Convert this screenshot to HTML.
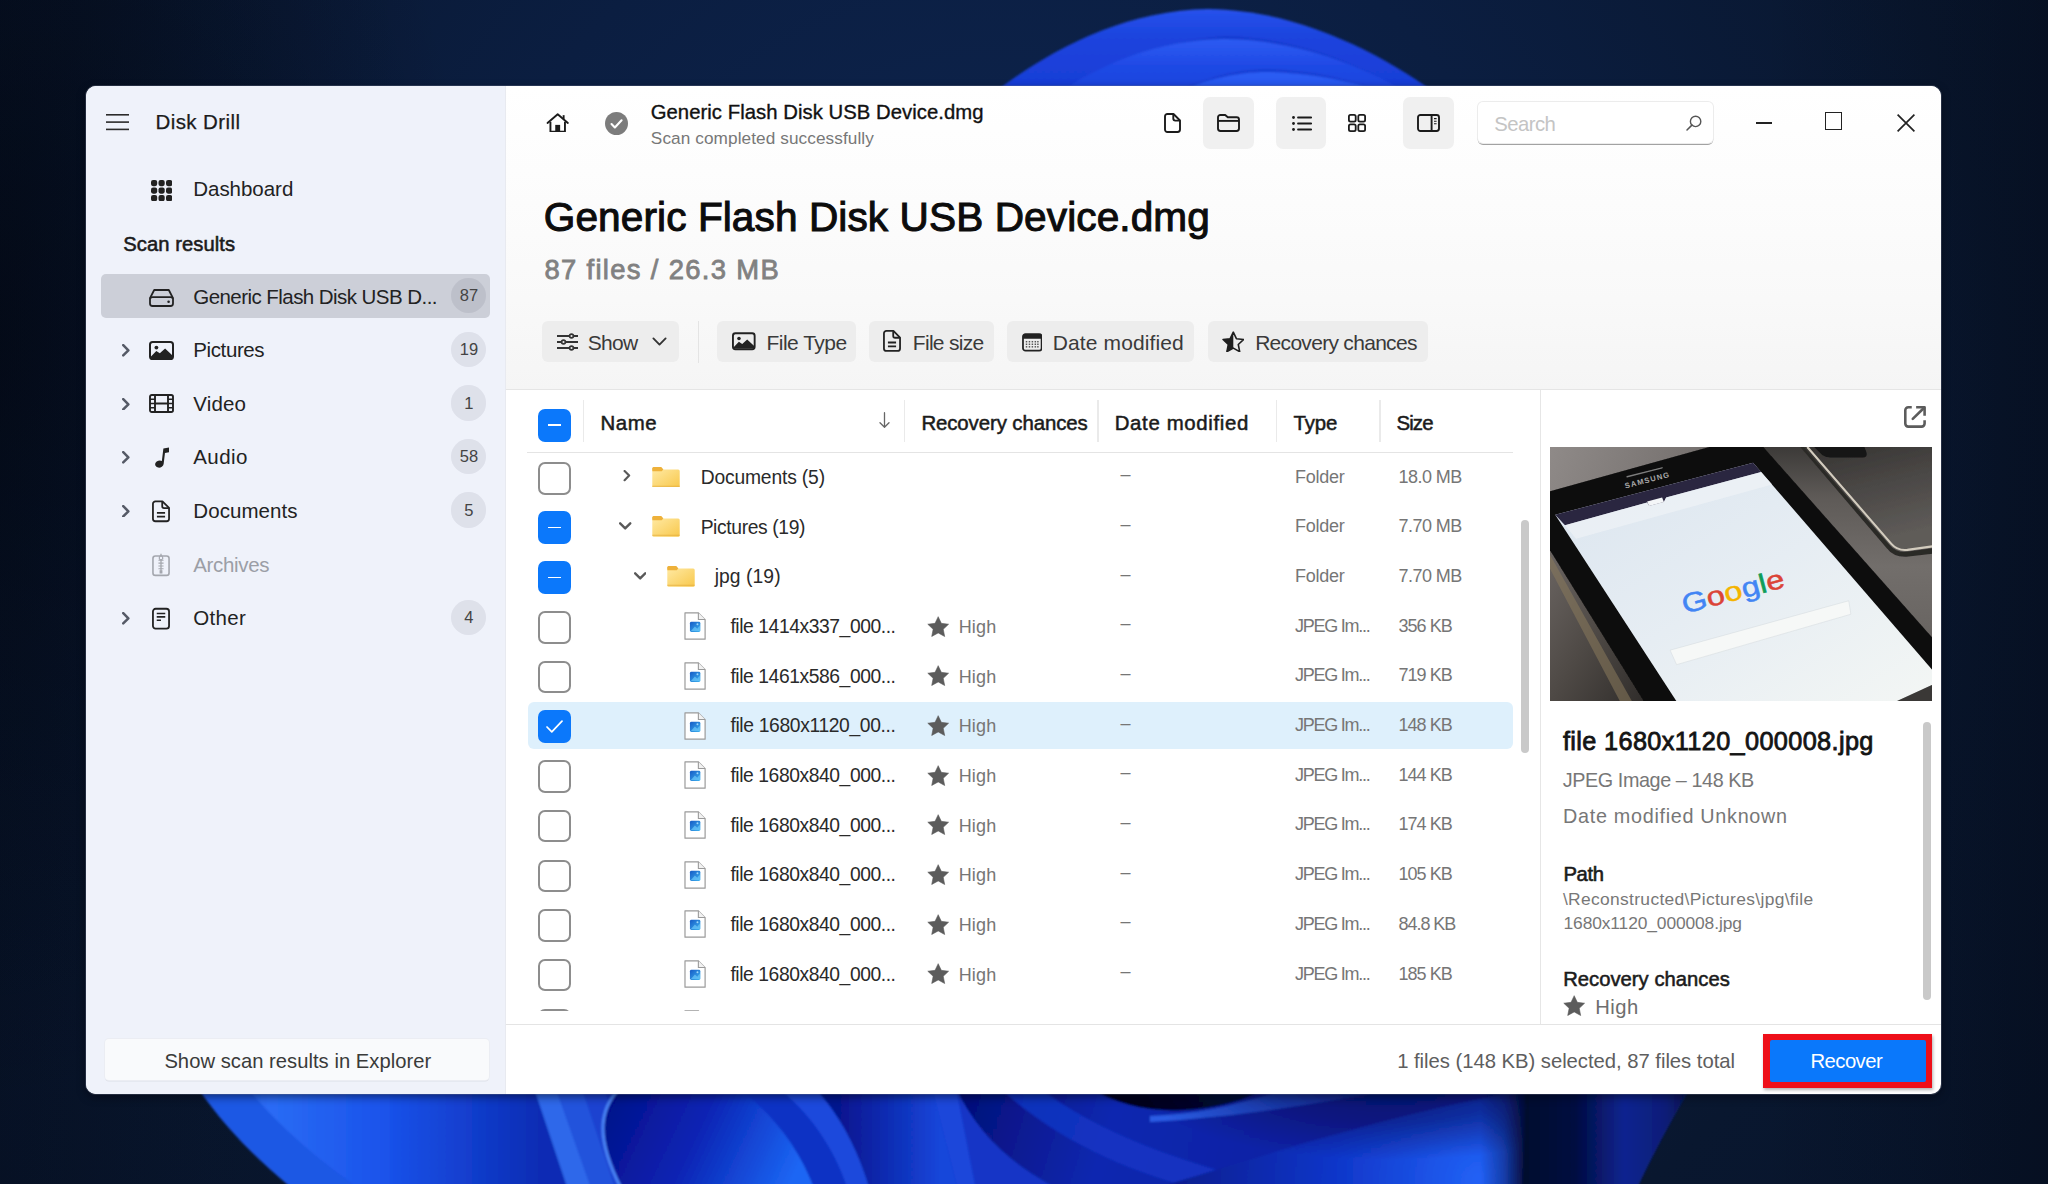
<!DOCTYPE html>
<html lang="en">
<head>
<meta charset="utf-8">
<title>Disk Drill</title>
<style>
*{box-sizing:border-box;margin:0;padding:0}
html,body{width:2048px;height:1184px;overflow:hidden;background:#0a1830}
body{font-family:"Liberation Sans",sans-serif;position:relative;color:#1b1b1b}
#stage{position:absolute;left:0;top:0;width:2048px;height:1184px;overflow:hidden}
#stage div,#stage svg.ic,#stage .t,#stage svg.wall,#stage svg.photo{position:absolute}
.t{white-space:pre;line-height:1;display:block}
nav,header,main,aside,footer,section,ul,li,h1,h2,h3,p,button{display:contents;list-style:none;font:inherit;border:0;background:none}
.win{border-radius:10px;box-shadow:0 0 0 1px rgba(120,130,155,.28),0 3px 9px 0 rgba(0,0,10,.5)}
.badge{border-radius:50%;background:rgba(10,15,40,.075)}
.chip{background:#ededed;border-radius:6px}
.tbb{background:#f0f0f0;border-radius:7px}
.cb{border:2px solid #8d8d8d;border-radius:7px;background:#fff}
.cbx{border-radius:7px;background:#0b78fb}
</style>
</head>
<body>
<div id="stage">
<svg class="wall" width="2048" height="1184" viewBox="0 0 2048 1184" aria-hidden="true">
<defs>
<radialGradient id="bgr" cx="1000" cy="420" r="1250" gradientUnits="userSpaceOnUse">
<stop offset="0" stop-color="#0e2652"/><stop offset=".45" stop-color="#0b1e41"/><stop offset=".8" stop-color="#09172f"/><stop offset="1" stop-color="#08152c"/></radialGradient>
<linearGradient id="bgv" x1="0" y1="0" x2="2048" y2="0" gradientUnits="userSpaceOnUse"><stop offset="0" stop-color="#02050e" stop-opacity=".25"/><stop offset=".1" stop-color="#02050e" stop-opacity=".08"/><stop offset=".2" stop-color="#02050e" stop-opacity="0"/><stop offset=".86" stop-color="#02050e" stop-opacity="0"/><stop offset=".94" stop-color="#02050e" stop-opacity=".15"/><stop offset="1" stop-color="#02050e" stop-opacity=".35"/></linearGradient>
<radialGradient id="bgl" cx="-40" cy="330" r="520" gradientUnits="userSpaceOnUse" gradientTransform="translate(-40 330) scale(1 1.5) translate(40 -330)"><stop offset="0" stop-color="#01040c" stop-opacity=".6"/><stop offset=".35" stop-color="#01040c" stop-opacity=".38"/><stop offset="1" stop-color="#01040c" stop-opacity="0"/></radialGradient>
<linearGradient id="ta" x1="0" y1="9" x2="0" y2="100" gradientUnits="userSpaceOnUse"><stop offset="0" stop-color="#2752ec"/><stop offset=".3" stop-color="#1c44de"/><stop offset="1" stop-color="#183cd4"/></linearGradient>
<linearGradient id="tb" x1="0" y1="39" x2="0" y2="100" gradientUnits="userSpaceOnUse"><stop offset="0" stop-color="#2d5cf3"/><stop offset=".45" stop-color="#1f49e4"/><stop offset="1" stop-color="#1b42da"/></linearGradient>
<linearGradient id="tc" x1="0" y1="0" x2="0" y2="1"><stop offset="0" stop-color="#2c5ef4"/><stop offset="1" stop-color="#2050ea"/></linearGradient>
<linearGradient id="b1" x1="200" y1="0" x2="540" y2="0" gradientUnits="userSpaceOnUse"><stop offset="0" stop-color="#1d52e2"/><stop offset=".2" stop-color="#2a6cf5"/><stop offset=".55" stop-color="#1a52ea"/><stop offset="1" stop-color="#0b2cb4"/></linearGradient>
<linearGradient id="b3" x1="600" y1="1094" x2="790" y2="1184" gradientUnits="userSpaceOnUse"><stop offset="0" stop-color="#040e86"/><stop offset=".5" stop-color="#0a24b4"/><stop offset="1" stop-color="#1c66f4"/></linearGradient>
<linearGradient id="b6" x1="838" y1="0" x2="940" y2="0" gradientUnits="userSpaceOnUse"><stop offset="0" stop-color="#06148e"/><stop offset="1" stop-color="#1646da"/></linearGradient>
<linearGradient id="b7" x1="960" y1="1094" x2="1250" y2="1184" gradientUnits="userSpaceOnUse"><stop offset="0" stop-color="#050e78"/><stop offset=".5" stop-color="#0b28b0"/><stop offset="1" stop-color="#0a22a6"/></linearGradient>
<radialGradient id="b8" cx="1480" cy="1180" r="330" gradientUnits="userSpaceOnUse"><stop offset="0" stop-color="#2262f6"/><stop offset=".45" stop-color="#0f35c8"/><stop offset="1" stop-color="#071a86"/></radialGradient>
<linearGradient id="b9" x1="1525" y1="0" x2="1690" y2="0" gradientUnits="userSpaceOnUse"><stop offset="0" stop-color="#03082e"/><stop offset=".3" stop-color="#040b40"/><stop offset=".6" stop-color="#0a2590"/><stop offset=".85" stop-color="#081d78"/><stop offset="1" stop-color="#06134e"/></linearGradient>
<radialGradient id="bdk" cx=".5" cy=".5" r=".5"><stop offset="0" stop-color="#050d5c" stop-opacity=".8"/><stop offset=".5" stop-color="#050d5c" stop-opacity=".5"/><stop offset="1" stop-color="#050d5c" stop-opacity="0"/></radialGradient>
<linearGradient id="bfo" x1="1480" y1="0" x2="1528" y2="0" gradientUnits="userSpaceOnUse"><stop offset="0" stop-color="#03082e" stop-opacity="0"/><stop offset=".5" stop-color="#03082e" stop-opacity=".35"/><stop offset="1" stop-color="#03082e" stop-opacity="1"/></linearGradient>
<filter id="bl" x="-2%" y="-20%" width="104%" height="140%"><feGaussianBlur stdDeviation="1.3"/></filter>
</defs>
<rect width="2048" height="1184" fill="url(#bgr)"/>
<rect width="2048" height="1184" fill="url(#bgv)"/>
<rect width="700" height="1184" fill="url(#bgl)"/>
<g filter="url(#bl)">
<path d="M985 100C1040 55 1120 10 1208 9C1300 10 1385 55 1445 100z" fill="url(#ta)"/>
<path d="M1042 106C1100 64 1160 41 1224 36C1300 38 1365 64 1428 106z" fill="#1232c0" opacity=".5"/>
<path d="M1050 100C1100 62 1160 40 1224 39C1300 40 1365 66 1420 100z" fill="url(#tb)"/>
<path d="M1150 104C1200 78 1235 69 1268 69C1320 70 1370 84 1418 104z" fill="#1232c0" opacity=".45"/>
<path d="M1160 100C1200 80 1235 72 1268 72C1320 73 1370 86 1410 100z" fill="url(#tc)"/>
</g>
<g filter="url(#bl)">
<path d="M198 1088C225 1128 258 1160 294 1190H1636C1650 1160 1668 1125 1690 1088z" fill="#1236c6"/>
<path d="M198 1088C225 1128 258 1160 294 1190H360C318 1160 280 1128 247 1088z" fill="#1f58e4"/>
<path d="M247 1088C280 1128 318 1160 360 1190H570L534 1088z" fill="url(#b1)"/>
<path d="M534 1088L568 1190H592L556 1088z" fill="#2e68ea"/>
<path d="M556 1088L592 1190H616L582 1088z" fill="#2253dc"/>
<path d="M582 1088L616 1190H640L604 1088z" fill="#1a42d0"/>
<path d="M620 1088C598 1110 596 1140 622 1190H815C800 1150 775 1115 738 1088z" fill="url(#b3)"/>
<path d="M620 1088C598 1110 596 1140 622 1190" fill="none" stroke="#4a84f6" stroke-width="3"/>
<path d="M738 1088C775 1115 800 1150 815 1190H848C835 1150 812 1115 778 1088z" fill="#1030c4"/>
<path d="M778 1088C812 1115 835 1150 848 1190H870C858 1150 842 1118 815 1088z" fill="#1a48dc"/>
<path d="M815 1088C842 1118 858 1150 870 1190H958L932 1088z" fill="url(#b6)"/>
<path d="M932 1088L958 1190H976L956 1088z" fill="#1a46da"/>
<path d="M956 1088C975 1130 1010 1165 1060 1190H1530L1530 1088z" fill="url(#b7)"/>
<path d="M1000 1088C1050 1135 1120 1170 1200 1190H1300C1200 1170 1100 1135 1040 1088z" fill="#1436c6" opacity=".8"/>
<path d="M1090 1088C1130 1112 1180 1118 1240 1100L1270 1088z" fill="#02051e"/>
<path d="M1150 1190C1250 1160 1400 1110 1540 1088H1530L1540 1190z" fill="url(#b8)"/>
<path d="M1150 1122C1230 1118 1320 1104 1400 1088H1290C1240 1104 1200 1114 1150 1116z" fill="#2a5ce4"/>
<ellipse cx="1390" cy="1086" rx="250" ry="74" fill="url(#bdk)"/>
<rect x="1480" y="1088" width="48" height="102" fill="url(#bfo)"/>
<path d="M1526 1088L1522 1190H1636C1650 1160 1668 1125 1690 1088z" fill="url(#b9)"/>
</g>
</svg>
<div class="win" style="left:86.2px;top:86.4px;width:1854.8px;height:1007.6px;background:#fff;overflow:hidden"><div style="left:0px;top:0px;width:419.8px;height:1007.6px;background:#eff2fa"></div><div style="left:419.8px;top:0px;width:1435px;height:303.6px;background:linear-gradient(#fff 0,#fdfdfd 28%,#f9f9f9 70%,#f5f5f5 100%)"></div><div style="left:419.8px;top:302.5px;width:1435px;height:1.5px;background:#e5e5e5"></div><div style="left:419.3px;top:0px;width:1px;height:1007.6px;background:#e8eaf0"></div><div style="left:1453.3999999999999px;top:303.6px;width:1.3px;height:634.5999999999999px;background:#e6e6e6"></div><div style="left:419.8px;top:937.4px;width:1435px;height:1.4px;background:#e4e4e4"></div></div>
<nav>
<svg class="ic" style="left:106px;top:113.6px" width="23" height="17" viewBox="0 0 23 17" ><rect x="0" y="0" width="23" height="1.6" fill="#2b2b2b"/><rect x="0" y="7.3" width="23" height="1.6" fill="#2b2b2b"/><rect x="0" y="14.6" width="23" height="1.6" fill="#2b2b2b"/></svg>
<h2 class="t" style="left:155.47px;top:111.70px;font-size:20.5px;color:#1b1b1b;letter-spacing:0.407px;-webkit-text-stroke:0.25px #1b1b1b;">Disk Drill</h2>
<svg class="ic" style="left:151px;top:179.7px" width="21" height="21" viewBox="0 0 21 21" ><rect x="0.0" y="0.0" width="6.200" height="6.200" rx="2.100" fill="#222"/><rect x="7.5" y="0.0" width="6.200" height="6.200" rx="2.100" fill="#222"/><rect x="15.0" y="0.0" width="6.200" height="6.200" rx="2.100" fill="#222"/><rect x="0.0" y="7.5" width="6.200" height="6.200" rx="2.100" fill="#222"/><rect x="7.5" y="7.5" width="6.200" height="6.200" rx="2.100" fill="#222"/><rect x="15.0" y="7.5" width="6.200" height="6.200" rx="2.100" fill="#222"/><rect x="0.0" y="15.0" width="6.200" height="6.200" rx="2.100" fill="#222"/><rect x="7.5" y="15.0" width="6.200" height="6.200" rx="2.100" fill="#222"/><rect x="15.0" y="15.0" width="6.200" height="6.200" rx="2.100" fill="#222"/></svg>
<span class="t" style="left:193.28px;top:179.40px;font-size:20.5px;color:#222;letter-spacing:-0.034px;">Dashboard</span>
<h3 class="t" style="left:123.29px;top:233.60px;font-size:20.2px;color:#1b1b1b;letter-spacing:0.065px;-webkit-text-stroke:0.55px #1b1b1b;">Scan results</h3>
<div style="left:101.3px;top:274.2px;width:388.8px;height:44px;background:#cccfd8;border-radius:5px"></div>
<ul>
<li>
<svg class="ic" style="left:149px;top:289.4px" width="25" height="18" viewBox="0 0 25 18" ><path d="M5.2 1h14.6l4.2 8.2v5.3a2.5 2.5 0 0 1-2.5 2.5h-18A2.5 2.5 0 0 1 1 14.500V9.200z" fill="none" stroke="#222" stroke-width="1.8" stroke-linejoin="round"/><path d="M1.200 9.500a2.500 2.500 0 0 1 2.300-1.300h18a2.500 2.500 0 0 1 2.300 1.300" fill="none" stroke="#222" stroke-width="1.8"/><circle cx="19.6" cy="12.8" r="1.3" fill="#222"/></svg>
<span class="t" style="left:193.28px;top:286.50px;font-size:20.5px;color:#222;letter-spacing:-0.553px;">Generic Flash Disk USB D...</span>
<div class="badge" style="left:450.5px;top:277.9px;width:35.6px;height:35.6px;"></div>
<span class="t" style="left:459.78px;top:287.40px;font-size:16.5px;color:#444;letter-spacing:0.066px;">87</span>
</li>
<li>
<svg class="ic" style="left:122.1px;top:344.1px" width="7.9" height="12.6" viewBox="0 0 8 13" ><path d="M1.200 1.200l5.300 5.300-5.300 5.300" fill="none" stroke="#555a66" stroke-width="2.6" stroke-linecap="round" stroke-linejoin="round"/></svg>
<svg class="ic" style="left:149px;top:340.7px" width="25" height="19" viewBox="0 0 25 19" ><rect x="1" y="1" width="23" height="17" rx="2.6" fill="none" stroke="#222" stroke-width="2"/><circle cx="7.4" cy="6.600" r="1.9" fill="#222"/><path d="M1.500 16l5.800-6 3.500 2.300 5.300-4.700 7.400 7v2.900h-22z" fill="#222"/></svg>
<span class="t" style="left:193.28px;top:340.10px;font-size:20.5px;color:#222;letter-spacing:-0.391px;">Pictures</span>
<div class="badge" style="left:450.5px;top:331.5px;width:35.6px;height:35.6px;"></div>
<span class="t" style="left:459.78px;top:341.00px;font-size:16.5px;color:#444;letter-spacing:0.066px;">19</span>
</li>
<li>
<svg class="ic" style="left:122.1px;top:397.7px" width="7.9" height="12.6" viewBox="0 0 8 13" ><path d="M1.200 1.200l5.300 5.300-5.300 5.300" fill="none" stroke="#555a66" stroke-width="2.6" stroke-linecap="round" stroke-linejoin="round"/></svg>
<svg class="ic" style="left:149px;top:394.4px" width="25" height="19" viewBox="0 0 25 19" ><rect x="1" y="1" width="23" height="17" rx="1.8" fill="none" stroke="#222" stroke-width="1.9"/><path d="M6 1v17M19 1v17M6 9.500h13" stroke="#222" stroke-width="1.9" fill="none"/><path d="M1 5.200h5M1 9.500h5M1 13.800h5M19 5.200h5M19 9.500h5M19 13.800h5" stroke="#222" stroke-width="1.400" fill="none"/></svg>
<span class="t" style="left:193.28px;top:393.70px;font-size:20.5px;color:#222;letter-spacing:0.141px;">Video</span>
<div class="badge" style="left:450.5px;top:385.09999999999997px;width:35.6px;height:35.6px;"></div>
<span class="t" style="left:464.33px;top:394.60px;font-size:16.5px;color:#444;">1</span>
</li>
<li>
<svg class="ic" style="left:122.1px;top:451.3px" width="7.9" height="12.6" viewBox="0 0 8 13" ><path d="M1.200 1.200l5.300 5.300-5.300 5.300" fill="none" stroke="#555a66" stroke-width="2.6" stroke-linecap="round" stroke-linejoin="round"/></svg>
<svg class="ic" style="left:154.3px;top:446.8px" width="14.6" height="21.6" viewBox="0 0 14 21" ><g transform="translate(2.600 0) skewX(-7)"><path d="M6.600 1.500l6.400-1.300v4.800l-4.300.9v10.600a4.100 3.500 0 1 1-2.100-3z" fill="#222"/></g></svg>
<span class="t" style="left:193.28px;top:447.30px;font-size:20.5px;color:#222;letter-spacing:0.422px;">Audio</span>
<div class="badge" style="left:450.5px;top:438.7px;width:35.6px;height:35.6px;"></div>
<span class="t" style="left:459.78px;top:448.20px;font-size:16.5px;color:#444;letter-spacing:0.066px;">58</span>
</li>
<li>
<svg class="ic" style="left:122.1px;top:504.90000000000003px" width="7.9" height="12.6" viewBox="0 0 8 13" ><path d="M1.200 1.200l5.300 5.300-5.300 5.300" fill="none" stroke="#555a66" stroke-width="2.6" stroke-linecap="round" stroke-linejoin="round"/></svg>
<svg class="ic" style="left:152.2px;top:500.3px" width="18" height="22.6" viewBox="0 0 19 23" ><path d="M3.600 1h7.400l7 7v11.400a2.600 2.600 0 0 1-2.600 2.600h-11.800a2.600 2.600 0 0 1-2.600-2.600v-15.800a2.600 2.600 0 0 1 2.600-2.600z" fill="none" stroke="#222" stroke-width="1.9" stroke-linejoin="round"/><path d="M10.800 1.200v5a2 2 0 0 0 2 2h5" fill="none" stroke="#222" stroke-width="1.9"/><path d="M5.200 13.200h8.600M5.200 17.200h8.600" stroke="#222" stroke-width="1.9" fill="none"/></svg>
<span class="t" style="left:193.28px;top:500.90px;font-size:20.5px;color:#222;letter-spacing:0.080px;">Documents</span>
<div class="badge" style="left:450.5px;top:492.3px;width:35.6px;height:35.6px;"></div>
<span class="t" style="left:464.33px;top:501.80px;font-size:16.5px;color:#444;">5</span>
</li>
<li>
<svg class="ic" style="left:152.2px;top:552.7px" width="18" height="24" viewBox="0 0 19 24" ><rect x="1" y="2.500" width="17" height="20.500" rx="2.600" fill="none" stroke="#a4a7ae" stroke-width="1.700"/><path d="M9.500 0v18" stroke="#a4a7ae" stroke-width="1.400"/><path d="M6.800 7h5.400M6.800 10h5.400M6.800 13h5.400M6.800 16h5.400" stroke="#a4a7ae" stroke-width="1.200"/><circle cx="9.500" cy="4.500" r="1.900" fill="#eef1f9" stroke="#a4a7ae" stroke-width="1.200"/><rect x="8" y="17.500" width="3" height="3.500" fill="#a4a7ae"/></svg>
<span class="t" style="left:193.28px;top:554.50px;font-size:20.5px;color:#9b9ea6;letter-spacing:-0.341px;">Archives</span>
</li>
<li>
<svg class="ic" style="left:122.1px;top:612.0999999999999px" width="7.9" height="12.6" viewBox="0 0 8 13" ><path d="M1.200 1.200l5.300 5.300-5.300 5.300" fill="none" stroke="#555a66" stroke-width="2.6" stroke-linecap="round" stroke-linejoin="round"/></svg>
<svg class="ic" style="left:152.2px;top:607.0999999999999px" width="18" height="23.4" viewBox="0 0 19 23" ><rect x="1" y="1" width="17" height="21" rx="2.800" fill="none" stroke="#222" stroke-width="1.900"/><path d="M5 6h9M5 9.600h9M5 13.200h4.500" stroke="#222" stroke-width="1.700" fill="none"/></svg>
<span class="t" style="left:193.28px;top:608.10px;font-size:20.5px;color:#222;letter-spacing:0.336px;">Other</span>
<div class="badge" style="left:450.5px;top:599.5px;width:35.6px;height:35.6px;"></div>
<span class="t" style="left:464.33px;top:609.00px;font-size:16.5px;color:#444;">4</span>
</li>
</ul>
<div style="left:105.1px;top:1039.3px;width:384.2px;height:41px;background:#f9fafc;border-radius:4px;box-shadow:0 0 0 1px #ebedf3,0 1.6px 0 0 #dcdfe7"></div>
<button><span class="t" style="left:164.39px;top:1050.90px;font-size:20.2px;color:#3a3a3a;letter-spacing:0.032px;">Show scan results in Explorer</span></button>
</nav>
<header>
<svg class="ic" style="left:546.3px;top:112.7px" width="23.4" height="19.8" viewBox="0 0 24 21" ><path d="M1.200 10.600L12 1.400l10.800 9.200" fill="none" stroke="#1b1b1b" stroke-width="2" stroke-linecap="round" stroke-linejoin="round"/><path d="M18.300 2.300v4" stroke="#1b1b1b" stroke-width="2" fill="none"/><path d="M4.300 9.300v10.500h15.400v-10.500" fill="none" stroke="#1b1b1b" stroke-width="2"/><rect x="9.400" y="12.600" width="5.200" height="7.200" fill="#1b1b1b"/></svg>
<svg class="ic" style="left:604.6px;top:112.1px" width="23.0" height="23.0" viewBox="0 0 24 24" ><circle cx="12" cy="12" r="12" fill="#7c7c7c"/><path d="M6.800 12.600l3.500 3.500 7-7.400" fill="none" stroke="#fff" stroke-width="2.200" stroke-linecap="round" stroke-linejoin="round"/></svg>
<h2 class="t" style="left:650.68px;top:102.30px;font-size:20.3px;color:#111;letter-spacing:0.048px;-webkit-text-stroke:0.35px #111;">Generic Flash Disk USB Device.dmg</h2>
<span class="t" style="left:650.84px;top:129.90px;font-size:17.2px;color:#777;letter-spacing:0.091px;">Scan completed successfully</span>
<svg class="ic" style="left:1163.6px;top:113px" width="17" height="20" viewBox="0 0 17 20" ><path d="M3.400 1h6.100l6.500 6.500v9.100a2.400 2.400 0 0 1-2.400 2.400h-10.200a2.400 2.400 0 0 1-2.400-2.400v-13.200a2.400 2.400 0 0 1 2.400-2.400z" fill="none" stroke="#1b1b1b" stroke-width="1.900" stroke-linejoin="round"/><path d="M9.300 1.200v4.400a2 2 0 0 0 2 2h4.500" fill="none" stroke="#1b1b1b" stroke-width="1.900"/></svg>
<div class="tbb" style="left:1202.6px;top:97.4px;width:51.2px;height:51.6px;"></div>
<svg class="ic" style="left:1216.8px;top:114px" width="23" height="18" viewBox="0 0 23 18" ><path d="M1 3.400a2.400 2.400 0 0 1 2.400-2.400h4.800l2.600 2.300h8.800a2.400 2.400 0 0 1 2.400 2.400v8.900a2.400 2.400 0 0 1-2.400 2.400h-16.200a2.400 2.400 0 0 1-2.400-2.400z" fill="none" stroke="#1b1b1b" stroke-width="1.900" stroke-linejoin="round"/><path d="M1 6.900h21" stroke="#1b1b1b" stroke-width="1.900"/></svg>
<div class="tbb" style="left:1276px;top:97.4px;width:50.4px;height:51.6px;"></div>
<svg class="ic" style="left:1291.8px;top:115.6px" width="20" height="15" viewBox="0 0 20 15" ><circle cx="1.500" cy="1.5" r="1.400" fill="#1b1b1b"/><path d="M6 1.5h13.200" stroke="#1b1b1b" stroke-width="1.800" stroke-linecap="round"/><circle cx="1.500" cy="7.5" r="1.400" fill="#1b1b1b"/><path d="M6 7.5h13.200" stroke="#1b1b1b" stroke-width="1.800" stroke-linecap="round"/><circle cx="1.500" cy="13.5" r="1.400" fill="#1b1b1b"/><path d="M6 13.5h13.200" stroke="#1b1b1b" stroke-width="1.800" stroke-linecap="round"/></svg>
<svg class="ic" style="left:1347.8px;top:114.2px" width="18" height="18" viewBox="0 0 18 18" ><rect x="0.9" y="0.9" width="6.800" height="6.800" rx="1.600" fill="none" stroke="#1b1b1b" stroke-width="1.800"/><rect x="0.9" y="10.3" width="6.800" height="6.800" rx="1.600" fill="none" stroke="#1b1b1b" stroke-width="1.800"/><rect x="10.3" y="0.9" width="6.800" height="6.800" rx="1.600" fill="none" stroke="#1b1b1b" stroke-width="1.800"/><rect x="10.3" y="10.3" width="6.800" height="6.800" rx="1.600" fill="none" stroke="#1b1b1b" stroke-width="1.800"/></svg>
<div class="tbb" style="left:1403.4px;top:97.4px;width:50.4px;height:51.6px;"></div>
<svg class="ic" style="left:1417.2px;top:114px" width="23" height="18" viewBox="0 0 23 18" ><rect x="1" y="1" width="21" height="16" rx="2.400" fill="none" stroke="#1b1b1b" stroke-width="1.900"/><path d="M14.600 1v16" stroke="#1b1b1b" stroke-width="1.900"/><path d="M17 4.600h2.600M17 7.200h2.600M17 9.800h2.600" stroke="#1b1b1b" stroke-width="1.100"/></svg>
<div style="left:1477.8px;top:101.6px;width:235.2px;height:41.6px;background:#fff;border-radius:5px;box-shadow:0 0 0 1px #ececec,0 1.6px 0 .3px #a2a2a2"></div>
<span class="t" style="left:1494.18px;top:113.60px;font-size:20.3px;color:#c4c4c4;letter-spacing:-0.530px;">Search</span>
<svg class="ic" style="left:1686px;top:114.6px" width="16" height="16" viewBox="0 0 16 16" ><circle cx="9.600" cy="6.400" r="5.200" fill="none" stroke="#555" stroke-width="1.400"/><path d="M5.900 10.100l-4.900 4.900" stroke="#555" stroke-width="1.500" stroke-linecap="round"/></svg>
<div style="left:1756px;top:122.1px;width:15.6px;height:1.6px;background:#222"></div>
<div style="left:1824.8px;top:112.4px;width:17.6px;height:17.4px;border:1.9px solid #222"></div>
<svg class="ic" style="left:1896.8px;top:113.6px" width="18" height="18" viewBox="0 0 18 18"><path d="M.6.6l16.800 16.800M17.400.6L.6 17.400" stroke="#222" stroke-width="1.700"/></svg>
<h1 class="t" style="left:543.77px;top:197.20px;font-size:40.6px;color:#0c0c0c;letter-spacing:0.095px;-webkit-text-stroke:1.05px #0c0c0c;">Generic Flash Disk USB Device.dmg</h1>
<p class="t" style="left:544.43px;top:255.50px;font-size:27.4px;color:#818181;letter-spacing:1.332px;-webkit-text-stroke:0.8px #818181;">87 files / 26.3 MB</p>
<div class="chip" style="left:542.3px;top:320.8px;width:136.4px;height:41px;"></div>
<svg class="ic" style="left:556.8px;top:332.6px" width="21" height="18" viewBox="0 0 21 18" ><path d="M0 3h21M0 9h21M0 15h21" stroke="#333" stroke-width="1.900"/><circle cx="14.500" cy="3" r="1.900" fill="#ededed" stroke="#333" stroke-width="1.700"/><circle cx="6.500" cy="9" r="1.900" fill="#ededed" stroke="#333" stroke-width="1.700"/><circle cx="14.500" cy="15" r="1.900" fill="#ededed" stroke="#333" stroke-width="1.700"/></svg>
<span class="t" style="left:587.75px;top:332.30px;font-size:21px;color:#3a3a3a;letter-spacing:-0.727px;">Show</span>
<svg class="ic" style="left:651.8px;top:336.6px" width="15" height="9.3" viewBox="0 0 13 8" ><path d="M1.200 1.200l5.300 5.300 5.300-5.300" fill="none" stroke="#333" stroke-width="1.6" stroke-linecap="round" stroke-linejoin="round"/></svg>
<div style="left:697.6px;top:320.5px;width:1.2px;height:42px;background:#e4e4e4"></div>
<div class="chip" style="left:717.3px;top:320.8px;width:139.2px;height:41px;"></div>
<svg class="ic" style="left:732px;top:332.2px" width="23.6" height="18.6" viewBox="0 0 25 19" ><rect x="1" y="1" width="23" height="17" rx="2.6" fill="none" stroke="#222" stroke-width="2"/><circle cx="7.4" cy="6.600" r="1.9" fill="#222"/><path d="M1.500 16l5.800-6 3.500 2.300 5.300-4.700 7.400 7v2.900h-22z" fill="#222"/></svg>
<span class="t" style="left:766.55px;top:332.30px;font-size:21px;color:#3a3a3a;letter-spacing:-0.535px;">File Type</span>
<div class="chip" style="left:869px;top:320.8px;width:125.4px;height:41px;"></div>
<svg class="ic" style="left:883px;top:330.4px" width="18" height="21.8" viewBox="0 0 19 23" ><path d="M3.600 1h7.400l7 7v11.400a2.600 2.600 0 0 1-2.600 2.600h-11.800a2.600 2.600 0 0 1-2.600-2.600v-15.800a2.600 2.600 0 0 1 2.600-2.600z" fill="none" stroke="#222" stroke-width="1.9" stroke-linejoin="round"/><path d="M10.800 1.200v5a2 2 0 0 0 2 2h5" fill="none" stroke="#222" stroke-width="1.9"/><path d="M5.200 13.200h8.600M5.200 17.200h8.600" stroke="#222" stroke-width="1.9" fill="none"/></svg>
<span class="t" style="left:912.85px;top:332.30px;font-size:21px;color:#3a3a3a;letter-spacing:-0.710px;">File size</span>
<div class="chip" style="left:1007px;top:320.8px;width:187.4px;height:41px;"></div>
<svg class="ic" style="left:1021.6px;top:332.8px" width="20.6" height="18.8" viewBox="0 0 21 19" ><rect x="1" y="1" width="19" height="17" rx="2.600" fill="none" stroke="#222" stroke-width="1.800"/><path d="M1 3.600a2.600 2.600 0 0 1 2.600-2.600h13.800a2.600 2.600 0 0 1 2.600 2.600v2.200h-19z" fill="#222"/><rect x="3.8499999999999996" y="8.05" width="1.500" height="1.500" fill="#555"/><rect x="6.85" y="8.05" width="1.500" height="1.500" fill="#555"/><rect x="9.85" y="8.05" width="1.500" height="1.500" fill="#555"/><rect x="12.85" y="8.05" width="1.500" height="1.500" fill="#555"/><rect x="15.45" y="8.05" width="1.500" height="1.500" fill="#555"/><rect x="3.8499999999999996" y="10.65" width="1.500" height="1.500" fill="#555"/><rect x="6.85" y="10.65" width="1.500" height="1.500" fill="#555"/><rect x="9.85" y="10.65" width="1.500" height="1.500" fill="#555"/><rect x="12.85" y="10.65" width="1.500" height="1.500" fill="#555"/><rect x="15.45" y="10.65" width="1.500" height="1.500" fill="#555"/><rect x="3.8499999999999996" y="13.25" width="1.500" height="1.500" fill="#555"/><rect x="6.85" y="13.25" width="1.500" height="1.500" fill="#555"/><rect x="9.85" y="13.25" width="1.500" height="1.500" fill="#555"/><rect x="12.85" y="13.25" width="1.500" height="1.500" fill="#555"/><rect x="15.45" y="13.25" width="1.500" height="1.500" fill="#555"/></svg>
<span class="t" style="left:1052.75px;top:332.30px;font-size:21px;color:#3a3a3a;letter-spacing:0.123px;">Date modified</span>
<div class="chip" style="left:1207.6px;top:320.8px;width:220.6px;height:41px;"></div>
<svg class="ic" style="left:1221.8px;top:330.6px" width="22.6" height="21.6" viewBox="0 0 24 23" ><defs><clipPath id="hs"><rect x="0" y="0" width="12" height="24"/></clipPath></defs><path d="M12 1.200l3.300 7 7.600.9-5.600 5.300 1.500 7.600-6.800-3.800-6.800 3.800 1.500-7.600-5.600-5.300 7.600-.9z" fill="none" stroke="#1f1f1f" stroke-width="1.700" stroke-linejoin="round"/><path d="M12 1.200l3.300 7 7.600.9-5.600 5.300 1.500 7.600-6.800-3.800-6.800 3.800 1.500-7.600-5.600-5.300 7.600-.9z" fill="#1f1f1f" clip-path="url(#hs)"/></svg>
<span class="t" style="left:1255.15px;top:332.30px;font-size:21px;color:#3a3a3a;letter-spacing:-0.700px;">Recovery chances</span>
</header>
<main>
<div class="cbx" style="left:537.8px;top:408.5px;width:33px;height:33px;"><div style="left:10px;top:15.9px;width:13px;height:1.4px;background:#fff"></div></div>
<div style="left:582.9px;top:400px;width:1.2px;height:41.5px;background:#eaeaea"></div>
<div style="left:903.6px;top:400px;width:1.2px;height:41.5px;background:#eaeaea"></div>
<div style="left:1097.4px;top:400px;width:1.2px;height:41.5px;background:#eaeaea"></div>
<div style="left:1275.9px;top:400px;width:1.2px;height:41.5px;background:#eaeaea"></div>
<div style="left:1379.4px;top:400px;width:1.2px;height:41.5px;background:#eaeaea"></div>
<span class="t" style="left:600.58px;top:412.80px;font-size:20.4px;color:#1b1b1b;letter-spacing:0.571px;-webkit-text-stroke:0.5px #1b1b1b;">Name</span>
<svg class="ic" style="left:878.8px;top:412px" width="11" height="16.4" viewBox="0 0 11 16" ><path d="M5.500 0.500v14M1 10.500l4.500 4.500 4.500-4.500" fill="none" stroke="#666" stroke-width="1.300" stroke-linecap="round" stroke-linejoin="round"/></svg>
<span class="t" style="left:921.38px;top:412.80px;font-size:20.4px;color:#1b1b1b;letter-spacing:-0.089px;-webkit-text-stroke:0.5px #1b1b1b;">Recovery chances</span>
<span class="t" style="left:1114.68px;top:412.80px;font-size:20.4px;color:#1b1b1b;letter-spacing:0.659px;-webkit-text-stroke:0.5px #1b1b1b;">Date modified</span>
<span class="t" style="left:1293.38px;top:412.80px;font-size:20.4px;color:#1b1b1b;letter-spacing:-0.066px;-webkit-text-stroke:0.5px #1b1b1b;">Type</span>
<span class="t" style="left:1396.38px;top:412.80px;font-size:20.4px;color:#1b1b1b;letter-spacing:-0.817px;-webkit-text-stroke:0.5px #1b1b1b;">Size</span>
<div style="left:527px;top:451.5px;width:985.5px;height:1.5px;background:#e4e4e4"></div>
<section>
<div class="cb" style="left:538px;top:462.0px;width:32.6px;height:32.6px;"></div>
<svg class="ic" style="left:623.0px;top:470.4px" width="8" height="11.2" viewBox="0 0 8 13" ><path d="M1.200 1.200l5.300 5.300-5.300 5.300" fill="none" stroke="#595959" stroke-width="2.5" stroke-linecap="round" stroke-linejoin="round"/></svg>
<svg class="ic" style="left:652.0px;top:466.7px" width="28" height="20.8" viewBox="0 0 29 22" ><defs><linearGradient id="fg652_466" x1="0" y1="0" x2="1" y2="1"><stop offset="0" stop-color="#ffe9a2"/><stop offset="1" stop-color="#f8c84c"/></linearGradient></defs><path d="M0 2a2 2 0 0 1 2-2h7.200l2.600 2.800h-11.800z" fill="#e8a92c"/><path d="M0 2.600h27.400a1.600 1.600 0 0 1 1.600 1.600v16.200a1.600 1.600 0 0 1-1.600 1.600h-25.800a1.600 1.600 0 0 1-1.600-1.600z" fill="url(#fg652_466)"/><path d="M0 2a2 2 0 0 1 2-2h7.200l2.400 2.600-1.600 1.800h-10z" fill="#eeb13a"/><path d="M0 20.400h29" stroke="#e2aa3a" stroke-width="1.200" opacity=".6"/></svg>
<span class="t" style="left:700.63px;top:468.00px;font-size:19.3px;color:#2a2a2a;letter-spacing:-0.166px;">Documents (5)</span>
<span class="t" style="left:1120.60px;top:465.40px;font-size:18px;color:#767676;">–</span>
<span class="t" style="left:1294.90px;top:467.80px;font-size:18px;color:#767676;letter-spacing:-0.226px;">Folder</span>
<span class="t" style="left:1398.50px;top:467.80px;font-size:18px;color:#767676;letter-spacing:-0.541px;">18.0 MB</span>
</section>
<section>
<div class="cbx" style="left:537.8px;top:511.16999999999996px;width:33px;height:33px;"><div style="left:10px;top:15.9px;width:13px;height:1.4px;background:#fff"></div></div>
<svg class="ic" style="left:619.4px;top:521.87px" width="12.4" height="8" viewBox="0 0 13 8" ><path d="M1.200 1.200l5.300 5.300 5.300-5.300" fill="none" stroke="#595959" stroke-width="2.5" stroke-linecap="round" stroke-linejoin="round"/></svg>
<svg class="ic" style="left:652.0px;top:516.37px" width="28" height="20.8" viewBox="0 0 29 22" ><defs><linearGradient id="fg652_516" x1="0" y1="0" x2="1" y2="1"><stop offset="0" stop-color="#ffe9a2"/><stop offset="1" stop-color="#f8c84c"/></linearGradient></defs><path d="M0 2a2 2 0 0 1 2-2h7.200l2.600 2.800h-11.800z" fill="#e8a92c"/><path d="M0 2.600h27.400a1.600 1.600 0 0 1 1.600 1.600v16.200a1.600 1.600 0 0 1-1.600 1.600h-25.800a1.600 1.600 0 0 1-1.600-1.600z" fill="url(#fg652_516)"/><path d="M0 2a2 2 0 0 1 2-2h7.200l2.400 2.600-1.600 1.800h-10z" fill="#eeb13a"/><path d="M0 20.400h29" stroke="#e2aa3a" stroke-width="1.200" opacity=".6"/></svg>
<span class="t" style="left:700.63px;top:517.67px;font-size:19.3px;color:#2a2a2a;letter-spacing:-0.369px;">Pictures (19)</span>
<span class="t" style="left:1120.60px;top:515.07px;font-size:18px;color:#767676;">–</span>
<span class="t" style="left:1294.90px;top:517.47px;font-size:18px;color:#767676;letter-spacing:-0.226px;">Folder</span>
<span class="t" style="left:1398.50px;top:517.47px;font-size:18px;color:#767676;letter-spacing:-0.541px;">7.70 MB</span>
</section>
<section>
<div class="cbx" style="left:537.8px;top:560.84px;width:33px;height:33px;"><div style="left:10px;top:15.9px;width:13px;height:1.4px;background:#fff"></div></div>
<svg class="ic" style="left:634.0px;top:571.5400000000001px" width="12.4" height="8" viewBox="0 0 13 8" ><path d="M1.200 1.200l5.300 5.300 5.300-5.300" fill="none" stroke="#595959" stroke-width="2.5" stroke-linecap="round" stroke-linejoin="round"/></svg>
<svg class="ic" style="left:667.476px;top:566.0400000000001px" width="28" height="20.8" viewBox="0 0 29 22" ><defs><linearGradient id="fg667_566" x1="0" y1="0" x2="1" y2="1"><stop offset="0" stop-color="#ffe9a2"/><stop offset="1" stop-color="#f8c84c"/></linearGradient></defs><path d="M0 2a2 2 0 0 1 2-2h7.200l2.600 2.800h-11.800z" fill="#e8a92c"/><path d="M0 2.600h27.400a1.600 1.600 0 0 1 1.600 1.600v16.200a1.600 1.600 0 0 1-1.600 1.600h-25.800a1.600 1.600 0 0 1-1.600-1.600z" fill="url(#fg667_566)"/><path d="M0 2a2 2 0 0 1 2-2h7.200l2.400 2.600-1.600 1.800h-10z" fill="#eeb13a"/><path d="M0 20.400h29" stroke="#e2aa3a" stroke-width="1.200" opacity=".6"/></svg>
<span class="t" style="left:714.65px;top:567.34px;font-size:19.3px;color:#2a2a2a;letter-spacing:0.080px;">jpg (19)</span>
<span class="t" style="left:1120.60px;top:564.74px;font-size:18px;color:#767676;">–</span>
<span class="t" style="left:1294.90px;top:567.14px;font-size:18px;color:#767676;letter-spacing:-0.226px;">Folder</span>
<span class="t" style="left:1398.50px;top:567.14px;font-size:18px;color:#767676;letter-spacing:-0.541px;">7.70 MB</span>
</section>
<section>
<div class="cb" style="left:538px;top:611.2099999999999px;width:32.6px;height:32.6px;"></div>
<svg class="ic" style="left:684.4px;top:612.2099999999999px" width="21.8" height="28" viewBox="0 0 22 28" ><defs><linearGradient id="fi684_612" x1="0" y1="0" x2="1" y2="1"><stop offset="0" stop-color="#155ac6"/><stop offset="1" stop-color="#3fb4f0"/></linearGradient></defs><path d="M1 0.700h13.500l6.800 6.800v19.800h-20.300z" fill="#fff" stroke="#9a9a9a" stroke-width="1.200" stroke-linejoin="round"/><path d="M14.500 0.700v6.800h6.800" fill="#f2f2f2" stroke="#9a9a9a" stroke-width="1.100" stroke-linejoin="round"/><rect x="6" y="9.600" width="10.500" height="10.500" rx="1.500" fill="url(#fi684_612)"/><path d="M7 19l4-4.600 2.400 2.400 2.600-3.200v5.400z" fill="#6cc8fa" opacity=".7"/><circle cx="13.600" cy="12.200" r="1" fill="#9fd8fa"/></svg>
<span class="t" style="left:730.43px;top:617.01px;font-size:19.3px;color:#2a2a2a;letter-spacing:-0.427px;">file 1414x337_000...</span>
<svg class="ic" style="left:927.4px;top:615.61px" width="22.4" height="21" viewBox="0.5 0.5 23 22" ><path d="M12 1.200l3.300 7 7.600.9-5.600 5.300 1.500 7.600-6.800-3.800-6.800 3.800 1.500-7.600-5.600-5.300 7.600-.9z" fill="#5c5c5c" stroke="#5c5c5c" stroke-width="0.600" stroke-linejoin="round"/></svg>
<span class="t" style="left:958.70px;top:618.01px;font-size:18px;color:#767676;letter-spacing:0.156px;">High</span>
<span class="t" style="left:1120.60px;top:614.41px;font-size:18px;color:#767676;">–</span>
<span class="t" style="left:1294.90px;top:616.81px;font-size:18px;color:#767676;letter-spacing:-1.235px;">JPEG Im...</span>
<span class="t" style="left:1398.50px;top:616.81px;font-size:18px;color:#767676;letter-spacing:-0.949px;">356 KB</span>
</section>
<section>
<div class="cb" style="left:538px;top:660.88px;width:32.6px;height:32.6px;"></div>
<svg class="ic" style="left:684.4px;top:661.88px" width="21.8" height="28" viewBox="0 0 22 28" ><defs><linearGradient id="fi684_661" x1="0" y1="0" x2="1" y2="1"><stop offset="0" stop-color="#155ac6"/><stop offset="1" stop-color="#3fb4f0"/></linearGradient></defs><path d="M1 0.700h13.500l6.800 6.800v19.800h-20.300z" fill="#fff" stroke="#9a9a9a" stroke-width="1.200" stroke-linejoin="round"/><path d="M14.500 0.700v6.800h6.800" fill="#f2f2f2" stroke="#9a9a9a" stroke-width="1.100" stroke-linejoin="round"/><rect x="6" y="9.600" width="10.500" height="10.500" rx="1.500" fill="url(#fi684_661)"/><path d="M7 19l4-4.600 2.400 2.400 2.600-3.200v5.400z" fill="#6cc8fa" opacity=".7"/><circle cx="13.600" cy="12.200" r="1" fill="#9fd8fa"/></svg>
<span class="t" style="left:730.43px;top:666.68px;font-size:19.3px;color:#2a2a2a;letter-spacing:-0.427px;">file 1461x586_000...</span>
<svg class="ic" style="left:927.4px;top:665.2800000000001px" width="22.4" height="21" viewBox="0.5 0.5 23 22" ><path d="M12 1.200l3.300 7 7.600.9-5.600 5.300 1.500 7.600-6.800-3.800-6.800 3.800 1.500-7.600-5.600-5.300 7.600-.9z" fill="#5c5c5c" stroke="#5c5c5c" stroke-width="0.600" stroke-linejoin="round"/></svg>
<span class="t" style="left:958.70px;top:667.68px;font-size:18px;color:#767676;letter-spacing:0.156px;">High</span>
<span class="t" style="left:1120.60px;top:664.08px;font-size:18px;color:#767676;">–</span>
<span class="t" style="left:1294.90px;top:666.48px;font-size:18px;color:#767676;letter-spacing:-1.235px;">JPEG Im...</span>
<span class="t" style="left:1398.50px;top:666.48px;font-size:18px;color:#767676;letter-spacing:-0.949px;">719 KB</span>
</section>
<section>
<div style="left:527.5px;top:701.6px;width:985px;height:47px;background:#def0fc;border-radius:6px"></div>
<div class="cbx" style="left:537.8px;top:710.35px;width:33px;height:33px;"><svg class="ic" style="left:8px;top:10px" width="17" height="13" viewBox="0 0 17 13"><path d="M1 7l4.800 4.800L16 1.200" fill="none" stroke="#fff" stroke-width="1.700" stroke-linecap="round" stroke-linejoin="round"/></svg></div>
<svg class="ic" style="left:684.4px;top:711.55px" width="21.8" height="28" viewBox="0 0 22 28" ><defs><linearGradient id="fi684_711" x1="0" y1="0" x2="1" y2="1"><stop offset="0" stop-color="#155ac6"/><stop offset="1" stop-color="#3fb4f0"/></linearGradient></defs><path d="M1 0.700h13.500l6.800 6.800v19.800h-20.300z" fill="#fff" stroke="#9a9a9a" stroke-width="1.200" stroke-linejoin="round"/><path d="M14.500 0.700v6.800h6.800" fill="#f2f2f2" stroke="#9a9a9a" stroke-width="1.100" stroke-linejoin="round"/><rect x="6" y="9.600" width="10.500" height="10.500" rx="1.500" fill="url(#fi684_711)"/><path d="M7 19l4-4.600 2.400 2.400 2.600-3.200v5.400z" fill="#6cc8fa" opacity=".7"/><circle cx="13.600" cy="12.200" r="1" fill="#9fd8fa"/></svg>
<span class="t" style="left:730.43px;top:716.35px;font-size:19.3px;color:#2a2a2a;letter-spacing:-0.352px;">file 1680x1120_00...</span>
<svg class="ic" style="left:927.4px;top:714.95px" width="22.4" height="21" viewBox="0.5 0.5 23 22" ><path d="M12 1.200l3.300 7 7.600.9-5.600 5.300 1.500 7.600-6.800-3.800-6.800 3.800 1.500-7.600-5.600-5.300 7.600-.9z" fill="#5c5c5c" stroke="#5c5c5c" stroke-width="0.600" stroke-linejoin="round"/></svg>
<span class="t" style="left:958.70px;top:717.35px;font-size:18px;color:#767676;letter-spacing:0.156px;">High</span>
<span class="t" style="left:1120.60px;top:713.75px;font-size:18px;color:#767676;">–</span>
<span class="t" style="left:1294.90px;top:716.15px;font-size:18px;color:#767676;letter-spacing:-1.235px;">JPEG Im...</span>
<span class="t" style="left:1398.50px;top:716.15px;font-size:18px;color:#767676;letter-spacing:-0.949px;">148 KB</span>
</section>
<section>
<div class="cb" style="left:538px;top:760.2199999999999px;width:32.6px;height:32.6px;"></div>
<svg class="ic" style="left:684.4px;top:761.2199999999999px" width="21.8" height="28" viewBox="0 0 22 28" ><defs><linearGradient id="fi684_761" x1="0" y1="0" x2="1" y2="1"><stop offset="0" stop-color="#155ac6"/><stop offset="1" stop-color="#3fb4f0"/></linearGradient></defs><path d="M1 0.700h13.500l6.800 6.800v19.800h-20.300z" fill="#fff" stroke="#9a9a9a" stroke-width="1.200" stroke-linejoin="round"/><path d="M14.500 0.700v6.800h6.800" fill="#f2f2f2" stroke="#9a9a9a" stroke-width="1.100" stroke-linejoin="round"/><rect x="6" y="9.600" width="10.500" height="10.500" rx="1.500" fill="url(#fi684_761)"/><path d="M7 19l4-4.600 2.400 2.400 2.600-3.200v5.400z" fill="#6cc8fa" opacity=".7"/><circle cx="13.600" cy="12.200" r="1" fill="#9fd8fa"/></svg>
<span class="t" style="left:730.43px;top:766.02px;font-size:19.3px;color:#2a2a2a;letter-spacing:-0.427px;">file 1680x840_000...</span>
<svg class="ic" style="left:927.4px;top:764.62px" width="22.4" height="21" viewBox="0.5 0.5 23 22" ><path d="M12 1.200l3.300 7 7.600.9-5.600 5.300 1.500 7.600-6.800-3.800-6.800 3.800 1.500-7.600-5.600-5.300 7.600-.9z" fill="#5c5c5c" stroke="#5c5c5c" stroke-width="0.600" stroke-linejoin="round"/></svg>
<span class="t" style="left:958.70px;top:767.02px;font-size:18px;color:#767676;letter-spacing:0.156px;">High</span>
<span class="t" style="left:1120.60px;top:763.42px;font-size:18px;color:#767676;">–</span>
<span class="t" style="left:1294.90px;top:765.82px;font-size:18px;color:#767676;letter-spacing:-1.235px;">JPEG Im...</span>
<span class="t" style="left:1398.50px;top:765.82px;font-size:18px;color:#767676;letter-spacing:-0.949px;">144 KB</span>
</section>
<section>
<div class="cb" style="left:538px;top:809.89px;width:32.6px;height:32.6px;"></div>
<svg class="ic" style="left:684.4px;top:810.89px" width="21.8" height="28" viewBox="0 0 22 28" ><defs><linearGradient id="fi684_810" x1="0" y1="0" x2="1" y2="1"><stop offset="0" stop-color="#155ac6"/><stop offset="1" stop-color="#3fb4f0"/></linearGradient></defs><path d="M1 0.700h13.500l6.800 6.800v19.800h-20.300z" fill="#fff" stroke="#9a9a9a" stroke-width="1.200" stroke-linejoin="round"/><path d="M14.500 0.700v6.800h6.800" fill="#f2f2f2" stroke="#9a9a9a" stroke-width="1.100" stroke-linejoin="round"/><rect x="6" y="9.600" width="10.500" height="10.500" rx="1.500" fill="url(#fi684_810)"/><path d="M7 19l4-4.600 2.400 2.400 2.600-3.200v5.400z" fill="#6cc8fa" opacity=".7"/><circle cx="13.600" cy="12.200" r="1" fill="#9fd8fa"/></svg>
<span class="t" style="left:730.43px;top:815.69px;font-size:19.3px;color:#2a2a2a;letter-spacing:-0.427px;">file 1680x840_000...</span>
<svg class="ic" style="left:927.4px;top:814.2900000000001px" width="22.4" height="21" viewBox="0.5 0.5 23 22" ><path d="M12 1.200l3.300 7 7.600.9-5.600 5.300 1.500 7.600-6.800-3.800-6.800 3.800 1.500-7.600-5.600-5.300 7.600-.9z" fill="#5c5c5c" stroke="#5c5c5c" stroke-width="0.600" stroke-linejoin="round"/></svg>
<span class="t" style="left:958.70px;top:816.69px;font-size:18px;color:#767676;letter-spacing:0.156px;">High</span>
<span class="t" style="left:1120.60px;top:813.09px;font-size:18px;color:#767676;">–</span>
<span class="t" style="left:1294.90px;top:815.49px;font-size:18px;color:#767676;letter-spacing:-1.235px;">JPEG Im...</span>
<span class="t" style="left:1398.50px;top:815.49px;font-size:18px;color:#767676;letter-spacing:-0.949px;">174 KB</span>
</section>
<section>
<div class="cb" style="left:538px;top:859.56px;width:32.6px;height:32.6px;"></div>
<svg class="ic" style="left:684.4px;top:860.56px" width="21.8" height="28" viewBox="0 0 22 28" ><defs><linearGradient id="fi684_860" x1="0" y1="0" x2="1" y2="1"><stop offset="0" stop-color="#155ac6"/><stop offset="1" stop-color="#3fb4f0"/></linearGradient></defs><path d="M1 0.700h13.500l6.800 6.800v19.800h-20.300z" fill="#fff" stroke="#9a9a9a" stroke-width="1.200" stroke-linejoin="round"/><path d="M14.500 0.700v6.800h6.800" fill="#f2f2f2" stroke="#9a9a9a" stroke-width="1.100" stroke-linejoin="round"/><rect x="6" y="9.600" width="10.500" height="10.500" rx="1.500" fill="url(#fi684_860)"/><path d="M7 19l4-4.600 2.400 2.400 2.600-3.200v5.400z" fill="#6cc8fa" opacity=".7"/><circle cx="13.600" cy="12.200" r="1" fill="#9fd8fa"/></svg>
<span class="t" style="left:730.43px;top:865.36px;font-size:19.3px;color:#2a2a2a;letter-spacing:-0.427px;">file 1680x840_000...</span>
<svg class="ic" style="left:927.4px;top:863.96px" width="22.4" height="21" viewBox="0.5 0.5 23 22" ><path d="M12 1.200l3.300 7 7.600.9-5.600 5.300 1.500 7.600-6.800-3.800-6.800 3.800 1.500-7.600-5.600-5.300 7.600-.9z" fill="#5c5c5c" stroke="#5c5c5c" stroke-width="0.600" stroke-linejoin="round"/></svg>
<span class="t" style="left:958.70px;top:866.36px;font-size:18px;color:#767676;letter-spacing:0.156px;">High</span>
<span class="t" style="left:1120.60px;top:862.76px;font-size:18px;color:#767676;">–</span>
<span class="t" style="left:1294.90px;top:865.16px;font-size:18px;color:#767676;letter-spacing:-1.235px;">JPEG Im...</span>
<span class="t" style="left:1398.50px;top:865.16px;font-size:18px;color:#767676;letter-spacing:-0.949px;">105 KB</span>
</section>
<section>
<div class="cb" style="left:538px;top:909.2299999999999px;width:32.6px;height:32.6px;"></div>
<svg class="ic" style="left:684.4px;top:910.2299999999999px" width="21.8" height="28" viewBox="0 0 22 28" ><defs><linearGradient id="fi684_910" x1="0" y1="0" x2="1" y2="1"><stop offset="0" stop-color="#155ac6"/><stop offset="1" stop-color="#3fb4f0"/></linearGradient></defs><path d="M1 0.700h13.500l6.800 6.800v19.800h-20.300z" fill="#fff" stroke="#9a9a9a" stroke-width="1.200" stroke-linejoin="round"/><path d="M14.500 0.700v6.800h6.800" fill="#f2f2f2" stroke="#9a9a9a" stroke-width="1.100" stroke-linejoin="round"/><rect x="6" y="9.600" width="10.500" height="10.500" rx="1.500" fill="url(#fi684_910)"/><path d="M7 19l4-4.600 2.400 2.400 2.600-3.200v5.400z" fill="#6cc8fa" opacity=".7"/><circle cx="13.600" cy="12.200" r="1" fill="#9fd8fa"/></svg>
<span class="t" style="left:730.43px;top:915.03px;font-size:19.3px;color:#2a2a2a;letter-spacing:-0.427px;">file 1680x840_000...</span>
<svg class="ic" style="left:927.4px;top:913.63px" width="22.4" height="21" viewBox="0.5 0.5 23 22" ><path d="M12 1.200l3.300 7 7.600.9-5.600 5.300 1.500 7.600-6.800-3.800-6.800 3.800 1.500-7.600-5.600-5.300 7.600-.9z" fill="#5c5c5c" stroke="#5c5c5c" stroke-width="0.600" stroke-linejoin="round"/></svg>
<span class="t" style="left:958.70px;top:916.03px;font-size:18px;color:#767676;letter-spacing:0.156px;">High</span>
<span class="t" style="left:1120.60px;top:912.43px;font-size:18px;color:#767676;">–</span>
<span class="t" style="left:1294.90px;top:914.83px;font-size:18px;color:#767676;letter-spacing:-1.235px;">JPEG Im...</span>
<span class="t" style="left:1398.50px;top:914.83px;font-size:18px;color:#767676;letter-spacing:-1.041px;">84.8 KB</span>
</section>
<section>
<div class="cb" style="left:538px;top:958.9px;width:32.6px;height:32.6px;"></div>
<svg class="ic" style="left:684.4px;top:959.9px" width="21.8" height="28" viewBox="0 0 22 28" ><defs><linearGradient id="fi684_959" x1="0" y1="0" x2="1" y2="1"><stop offset="0" stop-color="#155ac6"/><stop offset="1" stop-color="#3fb4f0"/></linearGradient></defs><path d="M1 0.700h13.500l6.800 6.800v19.800h-20.300z" fill="#fff" stroke="#9a9a9a" stroke-width="1.200" stroke-linejoin="round"/><path d="M14.500 0.700v6.800h6.800" fill="#f2f2f2" stroke="#9a9a9a" stroke-width="1.100" stroke-linejoin="round"/><rect x="6" y="9.600" width="10.500" height="10.500" rx="1.500" fill="url(#fi684_959)"/><path d="M7 19l4-4.600 2.400 2.400 2.600-3.200v5.400z" fill="#6cc8fa" opacity=".7"/><circle cx="13.600" cy="12.200" r="1" fill="#9fd8fa"/></svg>
<span class="t" style="left:730.43px;top:964.70px;font-size:19.3px;color:#2a2a2a;letter-spacing:-0.427px;">file 1680x840_000...</span>
<svg class="ic" style="left:927.4px;top:963.3000000000001px" width="22.4" height="21" viewBox="0.5 0.5 23 22" ><path d="M12 1.200l3.300 7 7.600.9-5.600 5.300 1.500 7.600-6.800-3.800-6.800 3.800 1.500-7.600-5.600-5.300 7.600-.9z" fill="#5c5c5c" stroke="#5c5c5c" stroke-width="0.600" stroke-linejoin="round"/></svg>
<span class="t" style="left:958.70px;top:965.70px;font-size:18px;color:#767676;letter-spacing:0.156px;">High</span>
<span class="t" style="left:1120.60px;top:962.10px;font-size:18px;color:#767676;">–</span>
<span class="t" style="left:1294.90px;top:964.50px;font-size:18px;color:#767676;letter-spacing:-1.235px;">JPEG Im...</span>
<span class="t" style="left:1398.50px;top:964.50px;font-size:18px;color:#767676;letter-spacing:-0.949px;">185 KB</span>
</section>
<div style="left:538px;top:1008.5px;width:32.6px;height:2.9px;overflow:hidden"><div class="cb" style="left:0px;top:0px;width:32.6px;height:32.6px;"></div></div>
<div style="left:684.4px;top:1009.6px;width:22px;height:1.8px;overflow:hidden"><svg class="ic" style="left:0px;top:0px" width="21.8" height="28" viewBox="0 0 22 28" ><defs><linearGradient id="fi0_0" x1="0" y1="0" x2="1" y2="1"><stop offset="0" stop-color="#155ac6"/><stop offset="1" stop-color="#3fb4f0"/></linearGradient></defs><path d="M1 0.700h13.500l6.800 6.800v19.800h-20.300z" fill="#fff" stroke="#9a9a9a" stroke-width="1.200" stroke-linejoin="round"/><path d="M14.500 0.700v6.800h6.800" fill="#f2f2f2" stroke="#9a9a9a" stroke-width="1.100" stroke-linejoin="round"/><rect x="6" y="9.600" width="10.500" height="10.500" rx="1.500" fill="url(#fi0_0)"/><path d="M7 19l4-4.600 2.400 2.400 2.600-3.200v5.400z" fill="#6cc8fa" opacity=".7"/><circle cx="13.600" cy="12.200" r="1" fill="#9fd8fa"/></svg></div>
<div style="left:1520.6px;top:520px;width:8.4px;height:233px;background:#c9c9c9;border-radius:4.2px"></div>
</main>
<aside>
<svg class="ic" style="left:1904.1px;top:406px" width="21.9" height="21.9" viewBox="0 0 22 22" ><path d="M7.800 1.300H4.300a3 3 0 0 0-3 3V17.700a3 3 0 0 0 3 3H17.700a3 3 0 0 0 3-3V14.200" fill="none" stroke="#5c5c5c" stroke-width="2.600"/><path d="M12.200 1.300H20.700V9.700" fill="none" stroke="#5c5c5c" stroke-width="2.600" stroke-linejoin="round"/><path d="M20 2L8.800 13" fill="none" stroke="#5c5c5c" stroke-width="2.600" stroke-linecap="round"/></svg>
<svg class="photo" style="left:1549.6px;top:446.6px" width="382.4" height="254.6" viewBox="0 0 382 255" preserveAspectRatio="none" role="img" aria-label="preview">
<defs>
<linearGradient id="pbg" x1="0" y1="0" x2="1" y2="0.3"><stop offset="0" stop-color="#8f8a88"/><stop offset=".35" stop-color="#777270"/><stop offset=".6" stop-color="#4a4745"/><stop offset="1" stop-color="#3a3836"/></linearGradient>
<linearGradient id="pbl" x1="0" y1="0" x2="1" y2="1"><stop offset="0" stop-color="#6b6562"/><stop offset=".5" stop-color="#4e4945"/><stop offset="1" stop-color="#2e2b29"/></linearGradient>
<linearGradient id="psc" x1="0" y1="0" x2="1" y2="1"><stop offset="0" stop-color="#dbe5ef"/><stop offset=".5" stop-color="#e6edf3"/><stop offset="1" stop-color="#f3f6f4"/></linearGradient>
<linearGradient id="pd2" x1="0" y1="0" x2="0.3" y2="1"><stop offset="0" stop-color="#353331"/><stop offset=".5" stop-color="#4b4846"/><stop offset="1" stop-color="#5f5c59"/></linearGradient>
<linearGradient id="prt" x1="0" y1="0" x2="0" y2="1"><stop offset="0" stop-color="#3c3a38"/><stop offset=".25" stop-color="#5e5a57"/><stop offset=".6" stop-color="#726e6b"/><stop offset="1" stop-color="#676360"/></linearGradient>
<filter id="pb" x="-5%" y="-5%" width="110%" height="110%"><feGaussianBlur stdDeviation=".7"/></filter>
<clipPath id="pcl"><rect width="382" height="255"/></clipPath>
</defs>
<g clip-path="url(#pcl)">
<rect width="382" height="255" fill="url(#pbg)"/>
<path d="M205 0H382V200L300 110z" fill="url(#prt)"/>
<path d="M0 100L0 255H100z" fill="url(#pbl)"/>
<path d="M0 122L70 255H82L0 108z" fill="#8a7a5c" opacity=".55" filter="url(#pb)"/>
<g filter="url(#pb)">
<path d="M250 0L336 101Q343 110.500 356 110L382 107V0z" fill="#2b2927"/>
<path d="M253.400 0L340 99Q346 106 356 105L382 101.500V0z" fill="url(#pd2)"/>
<path d="M257 0L341 97Q347 104 357 103L382 99.500" fill="none" stroke="#d3ccbe" stroke-width="2.100"/>
<path d="M264 0L272 8Q275 10.500 280 10.500H312Q318 10.500 316 5L314 0z" fill="#141414"/>
<path d="M0 44.400L159 0H213L382 191V238.200L345.600 255H93.900L0 103.400z" fill="#0a0a0a"/>
<path d="M5.200 67.900L202.900 15.700L382 223.300V238.200L345.600 255H126.500z" fill="url(#psc)"/>
<path d="M5.200 67.900L202.900 15.700L211 25L116 50.500L113.800 55L99 59L97 55.500L15 78.500z" fill="#2b2640"/>
<path d="M15 78.500L97 55.500L99 59L113.800 55L116 50.500L211 25L222 37.500L26 92z" fill="#eef2f6" opacity=".75"/>
<path d="M97 54.500L112 50.600L113.800 55L99 59z" fill="#f4f6f8"/>
<path d="M120 203.500L298.400 154L300.600 167.500L126.500 218z" fill="#f6f8f7" stroke="#d3d9dd" stroke-width=".5"/>
<path d="M77 29.800L112 20.800" stroke="#7c7c7c" stroke-width="1.300" stroke-linecap="round"/>
</g>
<text transform="translate(75.500 41.500) rotate(-14.500)" font-family="Liberation Sans, sans-serif" font-size="7.600" font-weight="bold" letter-spacing="1.100" fill="#a9a9a9">SAMSUNG</text>
<text transform="translate(134.400 167) rotate(-14.800)" font-family="Liberation Sans, sans-serif" font-size="27" textLength="105" lengthAdjust="spacingAndGlyphs" stroke-width=".5"><tspan fill="#4285f4" stroke="#4285f4">G</tspan><tspan fill="#db4437" stroke="#db4437">o</tspan><tspan fill="#f4b400" stroke="#f4b400">o</tspan><tspan fill="#4285f4" stroke="#4285f4">g</tspan><tspan fill="#0f9d58" stroke="#0f9d58">l</tspan><tspan fill="#db4437" stroke="#db4437">e</tspan></text>
</g>
</svg>
<h3 class="t" style="left:1562.93px;top:729.20px;font-size:25.3px;color:#141414;letter-spacing:0.354px;-webkit-text-stroke:0.8px #141414;">file 1680x1120_000008.jpg</h3>
<span class="t" style="left:1562.81px;top:771.20px;font-size:19.8px;color:#777;letter-spacing:-0.419px;">JPEG Image – 148 KB</span>
<span class="t" style="left:1563.11px;top:807.40px;font-size:19.8px;color:#777;letter-spacing:0.694px;">Date modified Unknown</span>
<h3 class="t" style="left:1563.39px;top:864.00px;font-size:20.2px;color:#1b1b1b;letter-spacing:-0.274px;-webkit-text-stroke:0.6px #1b1b1b;">Path</h3>
<span class="t" style="left:1562.93px;top:891.20px;font-size:17.4px;color:#777;letter-spacing:0.337px;">\Reconstructed\Pictures\jpg\file</span>
<span class="t" style="left:1563.53px;top:914.50px;font-size:17.4px;color:#777;letter-spacing:-0.114px;">1680x1120_000008.jpg</span>
<h3 class="t" style="left:1563.19px;top:968.70px;font-size:20.2px;color:#1b1b1b;letter-spacing:0.035px;-webkit-text-stroke:0.55px #1b1b1b;">Recovery chances</h3>
<div style="left:1541px;top:994px;width:380px;height:29px;overflow:hidden"><svg class="ic" style="left:22px;top:1.2000000000000455px" width="22.4" height="21" viewBox="0.5 0.5 23 22" ><path d="M12 1.200l3.300 7 7.600.9-5.600 5.300 1.500 7.600-6.800-3.800-6.800 3.800 1.500-7.600-5.600-5.300 7.600-.9z" fill="#5c5c5c" stroke="#5c5c5c" stroke-width="0.600" stroke-linejoin="round"/></svg></div>
<span class="t" style="left:1595.19px;top:996.90px;font-size:20.2px;color:#6e6e6e;letter-spacing:0.526px;">High</span>
<div style="left:1922.6px;top:722px;width:8.4px;height:277.5px;background:#c9c9c9;border-radius:4.2px"></div>
</aside>
<footer>
<span class="t" style="left:1397.18px;top:1051.10px;font-size:20.3px;color:#5e5e5e;letter-spacing:-0.038px;">1 files (148 KB) selected, 87 files total</span>
<div style="left:1763px;top:1034.4px;width:169px;height:53.4px;background:#ee0f19;box-shadow:1px 2px 3px rgba(0,0,0,.3)"></div>
<div style="left:1770.3px;top:1040.4px;width:155.7px;height:41.2px;background:#0a78fb;border-radius:2px"></div>
<button><span class="t" style="left:1810.48px;top:1050.60px;font-size:20.3px;color:#fff;letter-spacing:-0.553px;">Recover</span></button>
</footer>
</div>
</body>
</html>
